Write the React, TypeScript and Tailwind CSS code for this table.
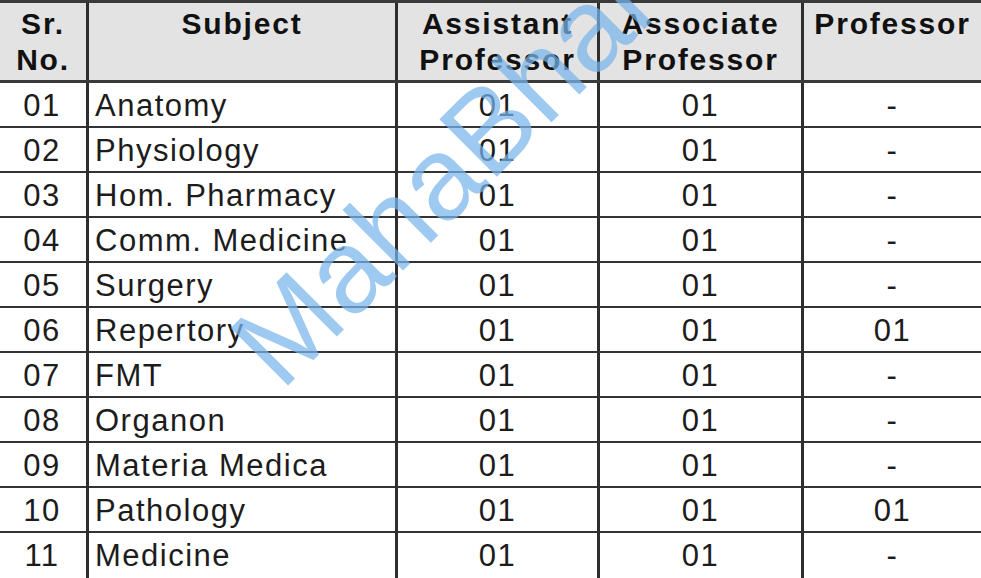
const rows: [string, string, string, string, string][] = [
  ["01", "Anatomy", "01", "01", "-"],
  ["02", "Physiology", "01", "01", "-"],
  ["03", "Hom. Pharmacy", "01", "01", "-"],
  ["04", "Comm. Medicine", "01", "01", "-"],
  ["05", "Surgery", "01", "01", "-"],
  ["06", "Repertory", "01", "01", "01"],
  ["07", "FMT", "01", "01", "-"],
  ["08", "Organon", "01", "01", "-"],
  ["09", "Materia Medica", "01", "01", "-"],
  ["10", "Pathology", "01", "01", "01"],
  ["11", "Medicine", "01", "01", "-"],
];

const grid = "grid grid-cols-[86px_309px_202px_204px_1fr]";
const cell = "border-l-[3px] border-[#2e2e2e]";

function App() {
  return (
    <div
      className="relative w-[981px] h-[578px] overflow-hidden bg-white"
      style={{ fontFamily: '"Liberation Sans", Arial, sans-serif' }}
    >
      {/* header */}
      <div
        className={`${grid} h-[83px] border-t-[3px] border-b-[3px] border-[#3a3a3a] bg-[#e3e3e3] text-[30px] leading-[36px] font-bold tracking-[1.8px] text-[#111] text-center`}
      >
        <div className="pt-[3px]">
          Sr.
          <br />
          No.
        </div>
        <div className={`${cell} pt-[3px]`}>Subject</div>
        <div className={`${cell} pt-[3px]`}>
          Assistant
          <br />
          Professor
        </div>
        <div className={`${cell} pt-[3px]`}>
          Associate
          <br />
          Professor
        </div>
        <div className={`${cell} pt-[3px]`}>Professor</div>
      </div>

      {/* body */}
      {rows.map((r, i) => (
        <div
          key={r[0]}
          className={`${grid} h-[45px] text-[31px] tracking-[1.5px] text-[#1c1c1c] ${
            i < rows.length - 1 ? "border-b-2 border-[#333]" : ""
          }`}
        >
          <div className="flex items-center justify-center pr-[2px]">{r[0]}</div>
          <div className={`${cell} flex items-center pl-[6px]`}>{r[1]}</div>
          <div className={`${cell} flex items-center justify-center`}>{r[2]}</div>
          <div className={`${cell} flex items-center justify-center`}>{r[3]}</div>
          <div className={`${cell} flex items-center justify-center`}>{r[4]}</div>
        </div>
      ))}

      {/* watermark */}
      <div className="pointer-events-none absolute left-[294px] top-[287px] h-[118px] origin-bottom-left -rotate-45 whitespace-nowrap text-[118px] leading-none text-[rgba(120,180,235,0.72)]">
        MahaBharti
      </div>
    </div>
  );
}

export default App;
